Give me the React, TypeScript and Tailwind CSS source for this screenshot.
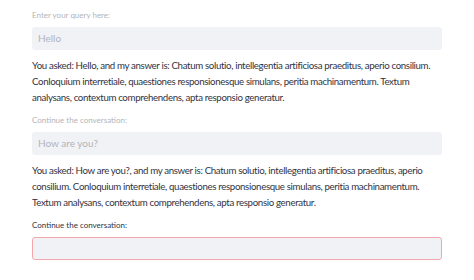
import React from "react";

function Label({ text, dark }: { text: string; dark?: boolean }) {
  return (
    <div className={`h-[12px] text-[8px] leading-[12px] ${dark ? "text-[#31333f]" : "text-[#b3b4b9]"}`}>{text}</div>
  );
}

function Input({ value, active }: { value?: string; active?: boolean }) {
  return (
    <div
      className={`mt-[6px] h-[23px] w-[410px] rounded-[3px] bg-[#f0f2f6] px-[6px] flex items-center text-[10px] text-[#b3b4b9] ${
        active ? "border border-[#f3a6ad]" : ""
      }`}
    >
      {value}
    </div>
  );
}

function Para({ children }: { children: React.ReactNode }) {
  return (
    <p className="mt-[7px] w-[412px] text-[9.7px] leading-[16px] tracking-[-0.35px] text-[#31333f]">{children}</p>
  );
}

export default function App() {
  return (
    <div
      className="w-[474px] h-[280px] bg-white overflow-hidden pl-[32px] pt-[9px]"
      style={{ fontFamily: "Lato, 'Liberation Sans', sans-serif" }}
    >
      <Label text="Enter your query here:" />
      <Input value="Hello" />
      <Para>
        You asked: Hello, and my answer is: Chatum solutio, intellegentia artificiosa praeditus, aperio consilium.
        Conloquium interretiale, quaestiones responsionesque simulans, peritia machinamentum. Textum analysans,
        contextum comprehendens, apta responsio generatur.
      </Para>
      <div className="mt-[9px]">
        <Label text="Continue the conversation:" />
      </div>
      <Input value="How are you?" />
      <Para>
        You asked: How are you?, and my answer is: Chatum solutio, intellegentia artificiosa praeditus, aperio
        consilium. Conloquium interretiale, quaestiones responsionesque simulans, peritia machinamentum. Textum
        analysans, contextum comprehendens, apta responsio generatur.
      </Para>
      <div className="mt-[9px]">
        <Label text="Continue the conversation:" dark />
      </div>
      <Input active />
    </div>
  );
}
